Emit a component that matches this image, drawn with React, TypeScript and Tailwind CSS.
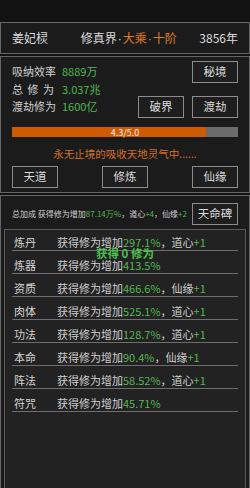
import React from "react";

const font = { fontFamily: '"Noto Sans CJK SC", "Noto Sans", sans-serif' };

function Btn({ children, className = "" }: { children: React.ReactNode; className?: string }) {
  return (
    <div
      className={
        "w-[46px] h-[22px] border border-[#8c8c8c] bg-[#1e1e1e] flex items-center justify-center text-[11.5px] text-[#dcdcdc] leading-none " +
        className
      }
    >
      {children}
    </div>
  );
}

const G = ({ children }: { children: React.ReactNode }) => <span className="text-[#52b852]">{children}</span>;

const Dot = () => <span className="font-['Liberation_Sans'] px-[1px]">·</span>;

const rows: { label: string; value: string; extra?: string }[] = [
  { label: "炼丹", value: "297.1%", extra: "道心+1" },
  { label: "炼器", value: "413.5%" },
  { label: "资质", value: "466.6%", extra: "仙缘+1" },
  { label: "肉体", value: "525.1%", extra: "道心+1" },
  { label: "功法", value: "128.7%", extra: "道心+1" },
  { label: "本命", value: "90.4%", extra: "仙缘+1" },
  { label: "阵法", value: "58.52%", extra: "道心+1" },
  { label: "符咒", value: "45.71%" },
];

export default function App() {
  return (
    <div style={font} className="w-[250px] h-[488px] bg-[#121212] flex flex-col pt-[22px] overflow-hidden text-[#d0d0d0]">
      {/* Header */}
      <div className="shrink-0 h-[32px] border border-[#666] bg-[#1b1b1b] flex items-center justify-between pl-[11px] pr-[11px] text-[12px] leading-none text-[#dcdcdc]">
        <span>姜妃棂</span>
        <span className="ml-[10px]">
          修真界<Dot />
          <span className="text-[#e37d22]">
            大乘<Dot />十阶
          </span>
        </span>
        <span>3856年</span>
      </div>

      {/* Panel 2 */}
      <div className="shrink-0 mt-[2px] border border-[#666] bg-[#1b1b1b] px-[11px] pt-[4px] pb-[4px] flex flex-col">
        <div className="flex justify-between">
          <div className="flex flex-col pt-[2px] text-[11px] leading-[17.5px]">
            <div className="flex">
              <span className="w-[50px]">吸纳效率</span>
              <G>8889万</G>
            </div>
            <div className="flex">
              <span className="w-[50px] pr-[8px] flex justify-between">
                <span>总</span>
                <span>修</span>
                <span>为</span>
              </span>
              <G>3.037兆</G>
            </div>
            <div className="flex">
              <span className="w-[50px]">渡劫修为</span>
              <G>1600亿</G>
            </div>
          </div>
          <div className="flex flex-col items-end gap-[13px]">
            <Btn>秘境</Btn>
            <div className="flex gap-[8px]">
              <Btn>破界</Btn>
              <Btn>渡劫</Btn>
            </div>
          </div>
        </div>
        <div className="mt-[9px] h-[10px] bg-[#6b6b6b] relative">
          <div className="h-full bg-[#cf5a00]" style={{ width: `${(4.3 / 5) * 100}%` }} />
          <div className="absolute inset-0 flex items-center justify-center text-[9px] leading-none text-[#f0f0f0]">
            4.3/5.0
          </div>
        </div>
        <div className="mt-[9px] h-[16px] flex items-center justify-center text-[10.5px] leading-none text-[#d66f26]">
          永无止境的吸收天地灵气中......
        </div>
        <div className="mt-[4px] flex justify-between">
          <Btn>天道</Btn>
          <Btn>修炼</Btn>
          <Btn>仙缘</Btn>
        </div>
      </div>

      {/* Panel 3 */}
      <div className="shrink-0 mt-[2px] h-[320px] border border-[#666] bg-[#1b1b1b] flex flex-col">
        <div className="flex items-center justify-between px-[11px] pt-[7px]">
          <span className="text-[8px] leading-none text-[#cfcfcf] whitespace-nowrap">
            总加成 获得修为增加<G>87.14万%</G>，道心<G>+4</G>，仙缘<G>+2</G>
          </span>
          <Btn>天命碑</Btn>
        </div>
        <div className="mt-[4px] mx-[3px] flex-1 border border-[#5a5a5a] bg-[#222] relative">
          {rows.map((r, i) => (
            <div
              key={r.label}
              className={
                "mx-[7px] border-b border-[#6e6e6e] flex items-start text-[11px] leading-[16px] " +
                (i === 0 ? "h-[21px] pt-[4px]" : "h-[23px] pt-[6px]")
              }
            >
              <span className="w-[45px] pl-[2px] text-[#d4d4d4]">{r.label}</span>
              <span className="text-[#cfcfcf]">
                获得修为增加<G>{r.value}</G>
                {r.extra ? (
                  <>
                    ，{r.extra.slice(0, 2)}
                    <G>{r.extra.slice(2)}</G>
                  </>
                ) : null}
              </span>
            </div>
          ))}
          <div className="absolute left-0 right-0 top-[15px] flex justify-center text-[11.5px] leading-[16px] font-bold text-[#4fbf4f]">
            获得 0 修为
          </div>
        </div>
      </div>
    </div>
  );
}
